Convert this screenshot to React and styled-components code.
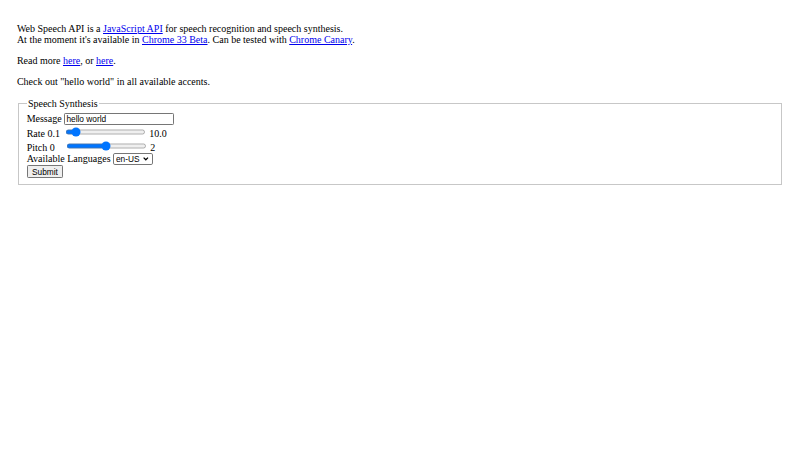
import React, { useState } from "react";
import styled, { createGlobalStyle } from "styled-components";

const Global = createGlobalStyle`
  html, body { margin: 0; padding: 0; background: #fff; }
  body { font-family: "Liberation Serif", "Times New Roman", serif; color: #000; }
`;

const Page = styled.div`
  zoom: 0.625;
  padding: 21px 27px 8px 27px;
  font-size: 16px;
  font-family: "Liberation Serif", "Times New Roman", serif;
`;

const Para = styled.p`
  margin: 16px 0;
`;

const Link = styled.a`
  color: #0000ee;
  text-decoration: underline;
`;

const Form = styled.form`
  padding-top: 2px;
`;

const Fieldset = styled.fieldset`
  margin: 0 2px;
  padding: 0.35em 0.75em 10px;
  border: 2px solid #c7c7c7;
`;

const Legend = styled.legend`
  padding: 0 2px;
`;

const TextInput = styled.input`
  font-family: "Liberation Sans", Arial, sans-serif;
  font-size: 13.3333px;
  box-sizing: border-box;
  width: 176px;
  height: 20px;
  padding: 1px 2px;
  border: 1px solid #767676;
  border-radius: 2px;
  margin: 0;
`;

const Range = styled.input`
  margin: 3px 2px 1px ${(p) => p.$left}px;
`;

const SelectWrap = styled.span`
  position: relative;
  display: inline-block;
`;

const Select = styled.select`
  appearance: none;
  -webkit-appearance: none;
  font-family: "Liberation Sans", Arial, sans-serif;
  font-size: 13.3333px;
  color: #000;
  height: 19px;
  margin: 0;
  border: 1px solid #767676;
  border-radius: 3px;
  background: #fff;
  padding: 0 19px 0 3px;
`;

const Chevron = styled.svg`
  position: absolute;
  right: 6px;
  top: 50%;
  margin-top: -3px;
  width: 9px;
  height: 6px;
  pointer-events: none;
`;

const Button = styled.button`
  font-family: "Liberation Sans", Arial, sans-serif;
  font-size: 13.3333px;
  color: #000;
  height: 21px;
  margin: 0;
  padding: 1px 7px;
  border: 1px solid #767676;
  border-radius: 2px;
  background: #efefef;
`;

export default function App() {
  const [msg, setMsg] = useState("hello world");
  const [rate, setRate] = useState(1);
  const [pitch, setPitch] = useState(1);
  return (
    <>
      <Global />
      <Page>
        <Para>
          Web Speech API is a <Link href="#">JavaScript API</Link> for speech
          recognition and speech synthesis.
          <br />
          At the moment it's available in <Link href="#">Chrome 33 Beta</Link>.
          Can be tested with <Link href="#">Chrome Canary</Link>.
        </Para>
        <Para>
          Read more <Link href="#">here</Link>, or <Link href="#">here</Link>.
        </Para>
        <Para>Check out "hello world" in all available accents.</Para>
        <Form onSubmit={(e) => e.preventDefault()}>
          <Fieldset>
            <Legend>Speech Synthesis</Legend>
            Message{" "}
            <TextInput
              type="text"
              value={msg}
              onChange={(e) => setMsg(e.target.value)}
            />
            <br />
            Rate 0.1{" "}
            <Range
              $left={4}
              type="range"
              min="0.1"
              max="10"
              step="0.1"
              value={rate}
              onChange={(e) => setRate(e.target.value)}
            />{" "}
            10.0
            <br />
            Pitch 0{" "}
            <Range
              $left={14}
              type="range"
              min="0"
              max="2"
              step="0.1"
              value={pitch}
              onChange={(e) => setPitch(e.target.value)}
            />{" "}
            2
            <br />
            Available Languages{" "}
            <SelectWrap>
              <Select defaultValue="en-US">
                <option>en-US</option>
              </Select>
              <Chevron viewBox="0 0 9 6">
                <path
                  d="M1 1 L4.5 4.5 L8 1"
                  fill="none"
                  stroke="#000"
                  strokeWidth="2"
                />
              </Chevron>
            </SelectWrap>
            <br />
            <Button type="submit">Submit</Button>
          </Fieldset>
        </Form>
      </Page>
    </>
  );
}
